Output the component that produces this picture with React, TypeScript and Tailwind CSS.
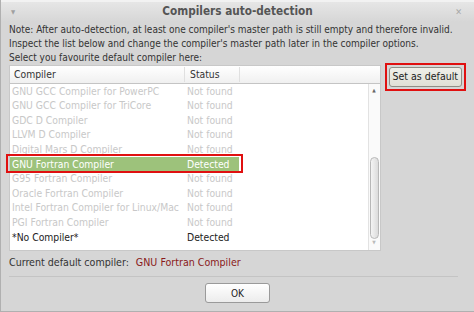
import React from "react";

const rows: { name: string; status: string; state: "nf" | "sel" | "det" }[] = [
  { name: "GNU GCC Compiler for PowerPC", status: "Not found", state: "nf" },
  { name: "GNU GCC Compiler for TriCore", status: "Not found", state: "nf" },
  { name: "GDC D Compiler", status: "Not found", state: "nf" },
  { name: "LLVM D Compiler", status: "Not found", state: "nf" },
  { name: "Digital Mars D Compiler", status: "Not found", state: "nf" },
  { name: "GNU Fortran Compiler", status: "Detected", state: "sel" },
  { name: "G95 Fortran Compiler", status: "Not found", state: "nf" },
  { name: "Oracle Fortran Compiler", status: "Not found", state: "nf" },
  { name: "Intel Fortran Compiler for Linux/Mac", status: "Not found", state: "nf" },
  { name: "PGI Fortran Compiler", status: "Not found", state: "nf" },
  { name: "*No Compiler*", status: "Detected", state: "det" },
];

export default function App() {
  return (
    <div className="w-[474px] h-[312px] overflow-hidden bg-[#d6d6d6] font-['DejaVu_Sans_Condensed','DejaVu_Sans',sans-serif] text-[#333] flex flex-col border-l border-b border-[#b0b0b0]">
      {/* title bar */}
      <div className="h-[22px] grid grid-cols-[1fr_auto_1fr] items-center px-[9px] bg-gradient-to-b from-[#e6e6e6] to-[#d6d6d6] border-t-2 border-[#f2f2f2]">
        <span className="text-[6px] text-[#a0a0a0] leading-none pl-[1px]">▼</span>
        <span className="text-[11.7px] font-bold text-[#555] leading-none">Compilers auto-detection</span>
        <span className="justify-self-end text-[9px] text-[#a8a8a8] leading-none pr-[3px]">✕</span>
      </div>
      <div className="flex flex-col px-[8px] flex-1">
        <div className="text-[10px] leading-[14px] text-[#333] pt-[1px] whitespace-nowrap">
          <div>Note: After auto-detection, at least one compiler's master path is still empty and therefore invalid.</div>
          <div>Inspect the list below and change the compiler's master path later in the compiler options.</div>
          <div>Select you favourite default compiler here:</div>
        </div>
        <div className="flex gap-[4px] items-start">
          {/* list */}
          <div className="w-[377px] h-[186px] bg-white border border-[#c8c8c8] flex flex-col relative text-[10.3px]">
            <div className="h-[18px] flex items-center bg-gradient-to-b from-[#ffffff] to-[#f0f0f0] border-b border-[#c4c4c4] text-[#333]">
              <div className="w-[175px] pl-[4px] border-r border-[#e0e0e0]">Compiler</div>
              <div className="w-[55px] pl-[5px] border-r border-[#e0e0e0]">Status</div>
              <div className="flex-1" />
            </div>
            <div className="flex flex-1">
              <div className="flex-1 flex flex-col">
                {rows.map((r) => (
                  <div
                    key={r.name}
                    className={
                      r.state === "sel"
                        ? "h-[14.6px] flex items-center w-[229px] bg-[#9dc27b] text-white"
                        : r.state === "det"
                        ? "h-[14.6px] flex items-center text-[#222]"
                        : "h-[14.6px] flex items-center text-[#c8c8c8]"
                    }
                  >
                    <div className="w-[175px] pl-[2px] whitespace-nowrap">{r.name}</div>
                    <div className="pl-[2px] whitespace-nowrap">{r.status}</div>
                  </div>
                ))}
              </div>
              {/* scrollbar */}
              <div className="w-[12px] border-l border-[#e2e2e2] bg-[#fafafa] flex flex-col items-center">
                <span className="text-[5px] text-[#666] mt-[4px] leading-none">▲</span>
                <div className="mt-[64px] w-[9px] h-[82px] rounded-[5px] border border-[#b8b8b8] bg-gradient-to-r from-[#f4f4f4] to-[#dcdcdc]" />
                <span className="text-[5px] text-[#bbb] mt-[1px] leading-none">▼</span>
              </div>
            </div>
            {/* red highlight */}
            <div className="absolute left-[-4px] top-[88px] w-[237px] h-[19px] border-2 border-[#e01010]" />
          </div>
          {/* button */}
          <div className="border-2 border-[#e01010] p-[2px] mt-[-2px]">
            <div className="h-[20px] px-[3px] flex items-center rounded-[3px] border border-[#8f8f86] bg-gradient-to-b from-[#f0f0ea] to-[#e0e0d6] text-[10.5px] text-[#222] whitespace-nowrap">
              Set as default
            </div>
          </div>
        </div>
        <div className="mt-[4px] text-[10.6px] leading-[14px] flex gap-[7px]">
          <span className="text-[#333]">Current default compiler:</span>
          <span className="text-[#8a1a1a]">GNU Fortran Compiler</span>
        </div>
        <div className="mt-[7px] h-px bg-[#c4c4c4] mr-[8px]" />
        <div className="flex justify-center mt-[6px]">
          <div className="w-[65px] h-[20px] rounded-[3px] border border-[#9a9a9a] bg-gradient-to-b from-[#ffffff] to-[#ececec] flex items-center justify-center text-[10px] text-[#222]">
            OK
          </div>
        </div>
      </div>
    </div>
  );
}
